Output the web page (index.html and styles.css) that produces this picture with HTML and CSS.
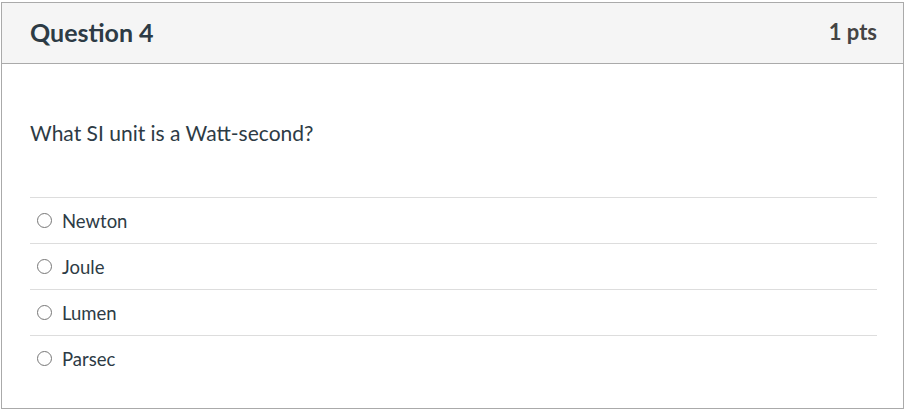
FILE: index.html
```html
<!DOCTYPE html>
<html>
<head>
<meta charset="utf-8">
<link rel="stylesheet" href="styles.css">
</head>
<body>
<div class="question">
  <div class="header">
    <h2 class="title">Question 4</h2>
    <div class="pts">1 pts</div>
  </div>
  <div class="content">
    <p class="text">What SI unit is a Watt-second?</p>
    <div class="answers">
      <label class="answer"><span class="radio"></span><span>Newton</span></label>
      <label class="answer"><span class="radio"></span><span>Joule</span></label>
      <label class="answer"><span class="radio"></span><span>Lumen</span></label>
      <label class="answer"><span class="radio"></span><span>Parsec</span></label>
    </div>
  </div>
</div>
</body>
</html>
```
FILE: styles.css
```css
html, body { margin: 0; padding: 0; background: #fff; }
body { padding: 2px 1px 0 1px; font-family: Lato, "Liberation Sans", sans-serif; color: #2d3b45; }
.question {
  width: 903px;
  height: 407px;
  border: 1px solid #aaa;
  box-sizing: border-box;
}
.header {
  display: flex;
  justify-content: space-between;
  align-items: center;
  background: #f5f5f5;
  border-bottom: 1px solid #aaa;
  height: 60px;
  padding: 0 26px 0 28px;
}
.title { margin: 0; font-size: 25px; font-weight: 700; line-height: 30px; margin-top: -3px; }
.pts { font-size: 22px; font-weight: 700; color: #444; margin-top: -3px; }
.content { padding: 0 26px 0 28px; }
.text { margin: 0; padding-top: 57px; font-size: 21px; line-height: 24px; height: 133px; box-sizing: border-box; }
.answer {
  display: flex;
  align-items: center;
  height: 46px;
  border-top: 1px solid #ddd;
  box-sizing: border-box;
  font-size: 18.5px;
  padding-left: 7px;
}
.radio {
  width: 15px; height: 15px;
  box-sizing: border-box;
  border: 1.5px solid #777;
  border-radius: 50%;
  margin-right: 10px;
}
```
